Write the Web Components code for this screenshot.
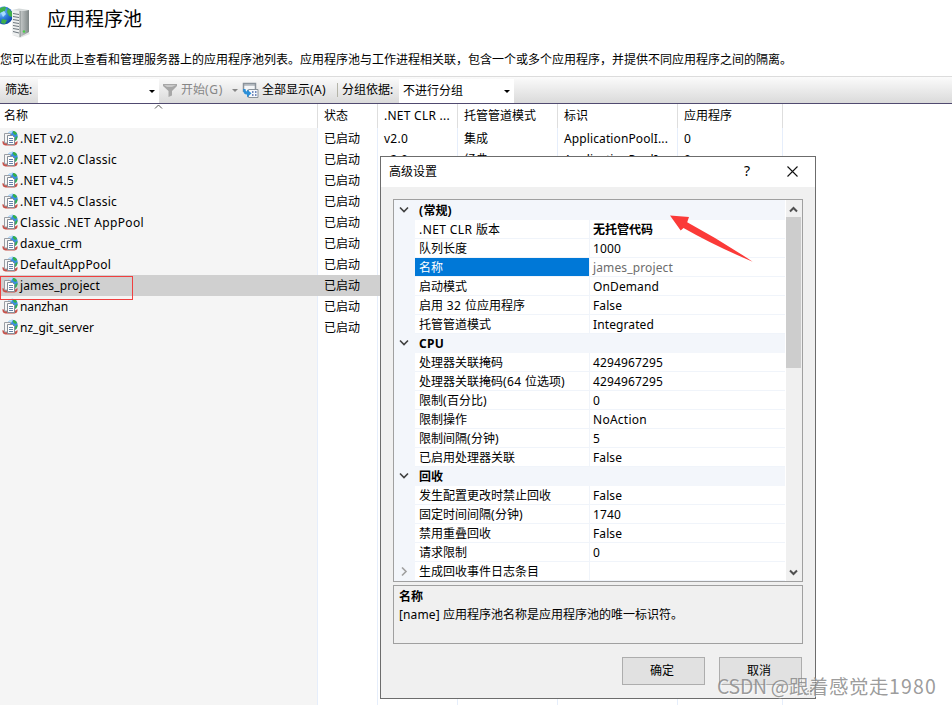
<!DOCTYPE html>
<html lang="zh-CN">
<head>
<meta charset="utf-8">
<title>应用程序池</title>
<style>
  html, body {
    margin: 0;
    height: 100%;
    overflow: hidden;
    background: #fff;
  }
  body {
    font: 12px/18px "Noto Sans", "Noto Sans CJK SC", sans-serif;
    color: #000;
  }
</style>
</head>
<body>
<iis-page></iis-page>

<template id="page">
  <style>
    :host {
      display: flex;
      flex-direction: column;
      position: relative;
      width: 952px;
      height: 705px;
      overflow: hidden;
    }
    header {
      display: flex;
      height: 42px;
      gap: 16px;
    }
    header svg { margin-top: 4px; }
    h1 {
      margin: 0;
      font-size: 19px;
      font-weight: normal;
      line-height: 38px;
    }
    p {
      margin: 0;
      height: 34px;
      line-height: 35px;
      white-space: nowrap;
    }
    advanced-dialog { position: absolute; left: 380px; top: 156px; }
    .mark {
      position: absolute;
      left: 0;
      top: 276px;
      box-sizing: border-box;
      width: 133px;
      height: 24px;
      border: 1px solid #f04040;
    }
    .arrow { position: absolute; left: 668px; top: 213px; }
    .watermark {
      position: absolute;
      display: flex;
      left: 717px;
      top: 674px;
      font: 19.5px/24px "Noto Sans CJK SC", sans-serif;
      color: rgba(130, 130, 130, .8);
      text-shadow: 1px 1px 0 rgba(255, 255, 255, .7);
      white-space: nowrap;
    }
    .watermark span { letter-spacing: .5px; }
  </style>
  <header>
    <svg width="31" height="36" viewBox="0 0 31 36">
      <defs>
        <radialGradient id="g" cx=".35" cy=".3" r=".8"><stop offset="0" stop-color="#8fd0ff"/><stop offset=".5" stop-color="#2b78d8"/><stop offset="1" stop-color="#0b3f9a"/></radialGradient>
        <linearGradient id="s"><stop offset="0" stop-color="#c8cccc"/><stop offset="1" stop-color="#7f8787"/></linearGradient>
      </defs>
      <path d="M12 31l8 3 10-4-2-3z" fill="#e4e6e6"/>
      <circle cx="4" cy="11.500" r="9" fill="url(#g)"/>
      <path d="M-1 5Q3 2 6 3l-1 4-3 1-2 1zM8 4l4 4v5l-3-1-2-4zM2 15l5 1-2 4-4-1z" fill="#3fb04a"/>
      <path d="M1 9l3-2 2 3-3 3z" fill="#a5dcff"/>
      <path d="M12 6l8 1v26l-8-3z" fill="#eef0f0"/>
      <path d="M20 7l9-1v22l-9 5z" fill="url(#s)"/>
      <path d="M12 6l7-1.500L29 6l-9 1z" fill="#d5dada"/>
      <path d="M13 9.500l6 1M13 12.500l6 1M13 15.500l6 1M13 18.500l6 1M13 21.500l6 1M13 24.500l6 1M13 27.500l6 1.500" stroke="#6b747c"/>
      <path d="M20 7v26" stroke="#5f6868" stroke-width=".7"/>
      <circle cx="24" cy="27.500" r="1.200" fill="#48d048"/>
    </svg>
    <h1>应用程序池</h1>
  </header>
  <p>您可以在此页上查看和管理服务器上的应用程序池列表。应用程序池与工作进程相关联，包含一个或多个应用程序，并提供不同应用程序之间的隔离。</p>
  <tool-strip></tool-strip>
  <pool-list></pool-list>
  <div class="mark"></div>
  <advanced-dialog></advanced-dialog>
  <svg class="arrow" width="86" height="50" viewBox="668 213 86 50"><path d="M670 215.500L689 217l-1.800 5.300Q720 240 752.700 261.700 715 246 683.500 228l-2.800 2.600z" fill="#fb3a38"/></svg>
  <div class="watermark"><ui-text w="72">CSDN @</ui-text><span>跟着感觉走</span><ui-text w="48">1980</ui-text></div>
</template>

<template id="toolstrip">
  <style>
    :host {
      display: flex;
      align-items: stretch;
      box-sizing: border-box;
      height: 28px;
      border-top: 1px solid #dcdcdc;
      border-bottom: 1px solid #504a70;
      background: linear-gradient(#fbfbfb, #dadada);
      line-height: 26px;
      white-space: nowrap;
    }
    .combo {
      display: flex;
      align-items: center;
      justify-content: space-between;
      box-sizing: border-box;
      margin-top: 2px;
      padding: 0 4px 0 4px;
      background: #fff;
    }
    .tri {
      align-self: center;
      border: 3px solid transparent;
      border-top-color: #000;
      border-bottom: 0;
    }
    .gray { color: #868686; }
    .gray.tri { border-top-color: #868686; margin-left: 9px; }
    svg { align-self: center; flex: none; }
    i { width: 1px; margin: 6px 0; background: #b4b4a8; }
  </style>
  <span style="width:33px;padding-left:5px">筛选:</span>
  <div class="combo" style="width:121px"><span></span><b class="tri"></b></div>
  <svg width="16" height="16" viewBox="0 0 16 16" style="margin-left:3px"><path d="M1 2h14v2L10 9v4.500L6.500 15V9L1 4z" fill="#a7a7a7"/><path d="M2 3h12l-4 2H5z" fill="#c9c9c9"/></svg>
  <ui-text w="42" class="gray" style="margin-left:3px">开始(G)</ui-text>
  <b class="tri gray"></b>
  <svg width="17" height="17" viewBox="0 0 17 17" style="margin-left:4px"><path d="M1.500 10V1.500h12V7" fill="#f4f6f8" stroke="#8a929a" stroke-width="1.500"/><path d="M1 3h12" stroke="#8a929a"/><path d="M6.500 7.500h9.500v8H6.500z" fill="#f6f8fc" stroke="#8a929a"/><path d="M10 10h1.500M13 10h1.500M10 13h1.500M13 13h1.500" stroke="#4866a8" stroke-width="1.500"/><path d="M1 7Q1 12.500 5 12.500V15.500l4.500-4.200L5 7.500v2Q3.500 9.500 3.500 7z" fill="#2b8fd8"/></svg>
  <ui-text w="64" style="margin-left:3px">全部显示(A)</ui-text>
  <i style="margin-left:11px"></i>
  <span style="margin-left:4px">分组依据:</span>
  <div class="combo" style="width:115px;margin-left:auto;margin-right:438px"><span>不进行分组</span><b class="tri"></b></div>
</template>

<template id="poollist">
  <style>
    :host {
      display: flex;
      flex: 1;
      flex-direction: column;
      position: relative;
      background: linear-gradient(#f5f5f5, #f5f5f5) 0 24px / 317px 100% no-repeat;
    }
    .head, .row {
      display: grid;
      grid-template-columns: 318px 60px 80px 100px 120px 105px;
      line-height: 22px;
    }
    .head { height: 24px; line-height: 24px; }
    .row { height: 21px; }
    .head span, .row span, .rest span {
      box-sizing: border-box;
      padding-left: 6px;
      border-right: 1px solid #e6eefb;
      white-space: nowrap;
      overflow: hidden;
    }
    .head span { border-color: #dedede; }
    .head span:first-child { padding-left: 4px; }
    .row span:first-child { display: flex; padding-left: 2px; gap: 2px; }
    .row.selected { background: #d0d0d0; width: 783px; }
    .row.selected span { border-color: #d0d0d0; }
    .rest {
      display: grid;
      flex: 1;
      grid-template-columns: 318px 60px 80px 100px 120px 105px;
    }
    .sort { position: absolute; left: 154px; top: 0; }
  </style>
  <svg class="sort" width="9" height="6"><path d="M1 4.500L4.500 1 8 4.500" fill="none" stroke="#555"/></svg>
  <div class="head">
    <span>名称</span><span>状态</span><span><ui-text w="66">.NET CLR ...</ui-text></span><span>托管管道模式</span><span>标识</span><span>应用程序</span>
  </div>
</template>

<template id="poolicon">
  <style>
    :host { display: block; width: 16px; height: 17px; }
    svg { display: block; margin-top: 2px; }
  </style>
  <svg width="16" height="17" viewBox="0 0 16 17">
    <circle cx="10.500" cy="6" r="5.200" fill="#3b8ee0"/>
    <path d="M6 3q2-3 5-2L9 4z" fill="#b5dcfb"/>
    <path d="M11 1q3 0 4 3l-2 1-2-2zM13.500 7l2-1q0 4-2.500 5z" fill="#35b045"/>
    <path d="M.5 11q-.5 4 3 4.500h9q3.500-.5 3-4.500l-3 2-9-.5z" fill="#c9524a"/>
    <path d="M2.500 3.500h6v9.500h-6z" fill="#f6f6f6" stroke="#9a9ea4"/>
    <path d="M5.500 5.500h5l2 2v7h-7z" fill="#fff" stroke="#858d96"/>
    <path d="M7 8.500h4M7 10.500h4M7 12.500h4" stroke="#6482a8"/>
  </svg>
</template>

<template id="dialog">
  <style>
    :host {
      display: flex;
      flex-direction: column;
      box-sizing: border-box;
      width: 436px;
      height: 543px;
      border: 1px solid #6c6c6c;
      background: #f0f0f0;
    }
    .title {
      display: flex;
      align-items: center;
      height: 30px;
      padding-left: 8px;
      background: #fff;
    }
    .title span { flex: 1; }
    .title b { font: 14px/28px "Noto Sans", sans-serif; margin: -2px 37px 0 0; }
    .title svg { margin: -2px 17px 0 0; }
    property-grid, .help { margin: 12px 12px 0; }
    .help {
      box-sizing: border-box;
      height: 59px;
      margin-top: 3px;
      padding: 2px 5px;
      border: 1px solid #a0a0a0;
    }
    .help b, .help ui-text { display: block; }
    .buttons {
      display: flex;
      justify-content: flex-end;
      gap: 14px;
      margin: 13px 13px 0 0;
    }
    .grip { position: absolute; right: 2px; bottom: 2px; }
  </style>
  <div class="title">
    <span>高级设置</span><b>?</b>
    <svg width="11" height="11"><path d="M.5.5l10 10M10.500.5l-10 10" stroke="#111" stroke-width="1.100"/></svg>
  </div>
  <property-grid></property-grid>
  <div class="help"><b>名称</b><ui-text w="284">[name] 应用程序池名称是应用程序池的唯一标识符。</ui-text></div>
  <div class="buttons"><push-button>确定</push-button><push-button>取消</push-button></div>
  <svg class="grip" width="9" height="9" fill="#b8b8b8"><path d="M6 0h2v2H6zM3 3h2v2H3zM6 3h2v2H6zM0 6h2v2H0zM3 6h2v2H3zM6 6h2v2H6z"/></svg>
</template>

<template id="button">
  <style>
    :host {
      display: block;
      box-sizing: border-box;
      width: 83px;
      height: 28px;
      padding-right: 3px;
      border: 1px solid #adadad;
      background: #e1e1e1;
      line-height: 26px;
      text-align: center;
    }
  </style>
  <slot></slot>
</template>

<template id="grid">
  <style>
    :host {
      display: flex;
      box-sizing: border-box;
      width: 410px;
      height: 383px;
      border: 1px solid #a0a0a0;
      background: #fff;
    }
    .rows {
      box-sizing: border-box;
      width: 391px;
      padding-top: 1px;
      background: #f3f6fb;
      overflow: hidden;
    }
    .row {
      display: grid;
      grid-template-columns: 21px 175px 195px;
      height: 19px;
      line-height: 20px;
    }
    .row span {
      box-sizing: border-box;
      height: 19px;
      padding-left: 4px;
      background: #fff;
      border-bottom: 1px solid #f0f4fa;
      white-space: nowrap;
    }
    .row .name { border-right: 1px solid #f0f4fa; }
    .row .value { padding-left: 3px; }
    .row.group span { background: none; border: 0; font-weight: bold; }
    .row.selected .name { background: #0078d7; color: #fff; }
    .row.selected .value { color: #6d6d6d; }
    .row.bold .value { font-weight: bold; }
    .row svg { display: block; margin: 5px 0 0 5px; }
    .bar {
      display: flex;
      flex-direction: column;
      justify-content: space-between;
      flex: 1;
      background: #f0f0f0;
      border-left: 1px solid #fff;
    }
    .bar svg { display: block; margin: 6px 3px 4px; }
    .bar svg:last-child { margin: 5px 3px; }
    .thumb { height: 151px; margin-right: 1px; background: #cdcdcd; margin-bottom: auto; }
  </style>
  <div class="rows"></div>
  <div class="bar">
    <svg width="9" height="7"><path d="M1 5.500L4.500 2 8 5.500" fill="none" stroke="#505050" stroke-width="2"/></svg>
    <div class="thumb"></div>
    <svg width="9" height="7"><path d="M1 1.500L4.500 5 8 1.500" fill="none" stroke="#505050" stroke-width="2"/></svg>
  </div>
</template>

<script>
// [name, width of the name, version, mode]
const pools = [
  ['.NET v2.0', 54, 'v2.0', '集成'],
  ['.NET v2.0 Classic', 97, 'v2.0', '经典'],
  ['.NET v4.5', 54],
  ['.NET v4.5 Classic', 97],
  ['Classic .NET AppPool', 124],
  ['daxue_crm', 62],
  ['DefaultAppPool', 91],
  ['james_project', 80],
  ['nanzhan', 48],
  ['nz_git_server', 74]
];

// [name, value, value width, name width]
const props = [
  ['(常规)', null, '', 33],
  ['.NET CLR 版本', '无托管代码', '', 81],
  ['队列长度', '1000', 28],
  ['名称', 'james_project', 80],
  ['启动模式', 'OnDemand', 66],
  ['启用 32 位应用程序', 'False', 29, 106],
  ['托管管道模式', 'Integrated', 61],
  ['CPU', null, '', 25],
  ['处理器关联掩码', '4294967295', 70],
  ['处理器关联掩码(64 位选项)', '4294967295', 70, 146],
  ['限制(百分比)', '0', '', 68],
  ['限制操作', 'NoAction', 54],
  ['限制间隔(分钟)', '5', '', 80],
  ['已启用处理器关联', 'False', 29],
  ['回收', null],
  ['发生配置更改时禁止回收', 'False', 29],
  ['固定时间间隔(分钟)', '1740', 28, 104],
  ['禁用重叠回收', 'False', 29],
  ['请求限制', '0'],
  ['生成回收事件日志条目', '']
];

class BaseElement extends HTMLElement {
  constructor() {
    super();
    this.attachShadow({ mode: 'open' });
    const template = document.getElementById(this.constructor.template);
    if (template) {
      this.shadowRoot.appendChild(template.content.cloneNode(true));
    }
  }
}

// text whose latin runs are spaced so that the whole has the width w
customElements.define('ui-text', class extends HTMLElement {
  constructor() {
    super();
    this.attachShadow({ mode: 'open' });
  }
  connectedCallback() {
    const parts = this.textContent.split(/([\x20-\x7e]+)/).filter(s => s);
    this.shadowRoot.innerHTML = '<style>:host { display: inline-block; white-space: pre; }</style><span></span>';
    const box = this.shadowRoot.querySelector('span');
    let latin = 0;
    parts.forEach(s => {
      const run = document.createElement('span');
      run.textContent = s;
      if (/[\x20-\x7e]/.test(s)) {
        run.className = 'latin';
        latin += s.length;
      }
      box.appendChild(run);
    });
    const w = parseFloat(this.getAttribute('w'));
    if (w && latin) {
      const gap = (w - box.getBoundingClientRect().width) / latin;
      box.querySelectorAll('.latin').forEach(run => run.style.letterSpacing = gap.toFixed(3) + 'px');
    }
  }
});

customElements.define('pool-icon', class extends BaseElement {
  static template = 'poolicon';
});

customElements.define('push-button', class extends BaseElement {
  static template = 'button';
});

customElements.define('tool-strip', class extends BaseElement {
  static template = 'toolstrip';
});

customElements.define('pool-list', class extends BaseElement {
  static template = 'poollist';
  connectedCallback() {
    let html = '';
    pools.forEach(([name, w, version, mode]) => {
      html += `<div class="row${name == 'james_project' ? ' selected' : ''}">
        <span><pool-icon></pool-icon><ui-text w="${w}">${name}</ui-text></span>
        <span>已启动</span>
        <span>${version ? `<ui-text w="24">${version}</ui-text>` : ''}</span>
        <span>${mode || ''}</span>
        <span>${version ? '<ui-text w="104">ApplicationPoolI...</ui-text>' : ''}</span>
        <span>${version ? '0' : ''}</span>
      </div>`;
    });
    html += '<div class="rest">' + '<span></span>'.repeat(6) + '</div>';
    this.shadowRoot.querySelector('.head').insertAdjacentHTML('afterend', html);
  }
});

customElements.define('property-grid', class extends BaseElement {
  static template = 'grid';
  connectedCallback() {
    const down = '<svg width="10" height="8"><path d="M1 1.500L5 5.500 9 1.500" fill="none" stroke="#404040" stroke-width="1.600"/></svg>';
    const right = '<svg width="10" height="10"><path d="M3 .5L7 4.500 3 8.500" fill="none" stroke="#a0a0a0" stroke-width="1.600"/></svg>';
    this.shadowRoot.querySelector('.rows').innerHTML = props.map(([name, value, vw, nw], ndx) => {
      let cls = 'row';
      if (value === null) cls += ' group';
      if (ndx == 1) cls += ' bold';
      if (ndx == 3) cls += ' selected';
      const icon = value === null ? down : value === '' ? right : '';
      return `<div class="${cls}"><div>${icon}</div>
        <span class="name"><ui-text w="${nw || ''}">${name}</ui-text></span>
        <span class="value"><ui-text w="${vw || ''}">${value || ''}</ui-text></span></div>`;
    }).join('');
  }
});

customElements.define('advanced-dialog', class extends BaseElement {
  static template = 'dialog';
});

customElements.define('iis-page', class extends BaseElement {
  static template = 'page';
});
</script>
</body>
</html>
